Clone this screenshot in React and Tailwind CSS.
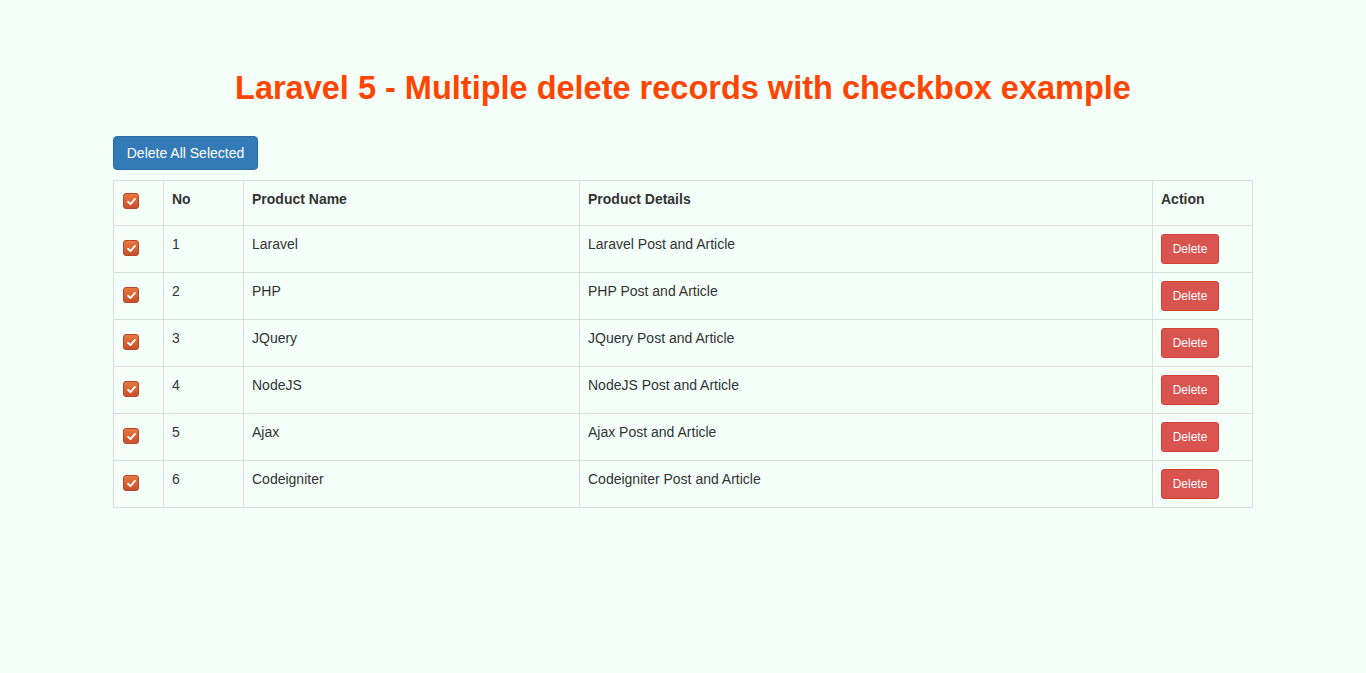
import React from 'react'

const ROWS = [
  { no: 1, name: 'Laravel', details: 'Laravel Post and Article' },
  { no: 2, name: 'PHP', details: 'PHP Post and Article' },
  { no: 3, name: 'JQuery', details: 'JQuery Post and Article' },
  { no: 4, name: 'NodeJS', details: 'NodeJS Post and Article' },
  { no: 5, name: 'Ajax', details: 'Ajax Post and Article' },
  { no: 6, name: 'Codeigniter', details: 'Codeigniter Post and Article' },
]

function Check() {
  return (
    <span className="inline-flex w-[16px] h-[16px] rounded-[3px] items-center justify-center bg-gradient-to-b from-[#e8773f] to-[#c9502a] border border-[#b4482a]">
      <svg width="11" height="11" viewBox="0 0 12 12">
        <path d="M2.2 6.3 L4.9 8.9 L9.8 3.2" fill="none" stroke="#fff" strokeWidth="2" strokeLinecap="round" strokeLinejoin="round" />
      </svg>
    </span>
  )
}

export default function App() {
  return (
    <div className="min-h-screen bg-[#f5fffa] text-[#333] text-[14px] leading-[20px]" style={{ fontFamily: '"Liberation Sans", Arial, sans-serif' }}>
      <div className="w-[1140px] mx-auto pt-[69px]">
        <h1 className="text-center text-[#ff4500] font-bold text-[32.5px] leading-[38px] mb-[29px]">
          Laravel 5 - Multiple delete records with checkbox example
        </h1>

        <button className="h-[34px] w-[145px] rounded-[4px] bg-[#337ab7] border border-[#2e6da4] text-white text-[14px]">
          Delete All Selected
        </button>

        <table className="w-full mt-[10px] border-collapse border border-[#ddd]">
          <thead>
            <tr className="h-[45px]">
              <th className="w-[50px] border border-[#ddd] px-[8px] pt-[12px] text-left align-top"><div className="pl-[1px] leading-none"><Check /></div></th>
              <th className="w-[80px] border border-[#ddd] px-[8px] pt-[8px] text-left font-bold align-top">No</th>
              <th className="w-[336px] border border-[#ddd] px-[8px] pt-[8px] text-left font-bold align-top">Product Name</th>
              <th className="w-[573px] border border-[#ddd] px-[8px] pt-[8px] text-left font-bold align-top">Product Details</th>
              <th className="border border-[#ddd] px-[8px] pt-[8px] text-left font-bold align-top">Action</th>
            </tr>
          </thead>
          <tbody>
            {ROWS.map((r) => (
              <tr key={r.no} className="h-[47px]">
                <td className="border border-[#ddd] px-[8px] align-top pt-[14px]"><div className="pl-[1px] leading-none"><Check /></div></td>
                <td className="border border-[#ddd] px-[8px] pt-[8px] align-top">{r.no}</td>
                <td className="border border-[#ddd] px-[8px] pt-[8px] align-top">{r.name}</td>
                <td className="border border-[#ddd] px-[8px] pt-[8px] align-top">{r.details}</td>
                <td className="border border-[#ddd] px-[8px] py-[8px] align-top">
                  <button className="h-[30px] w-[58px] rounded-[3px] bg-[#d9534f] border border-[#d43f3a] text-white text-[12px]">
                    Delete
                  </button>
                </td>
              </tr>
            ))}
          </tbody>
        </table>
      </div>
    </div>
  )
}
